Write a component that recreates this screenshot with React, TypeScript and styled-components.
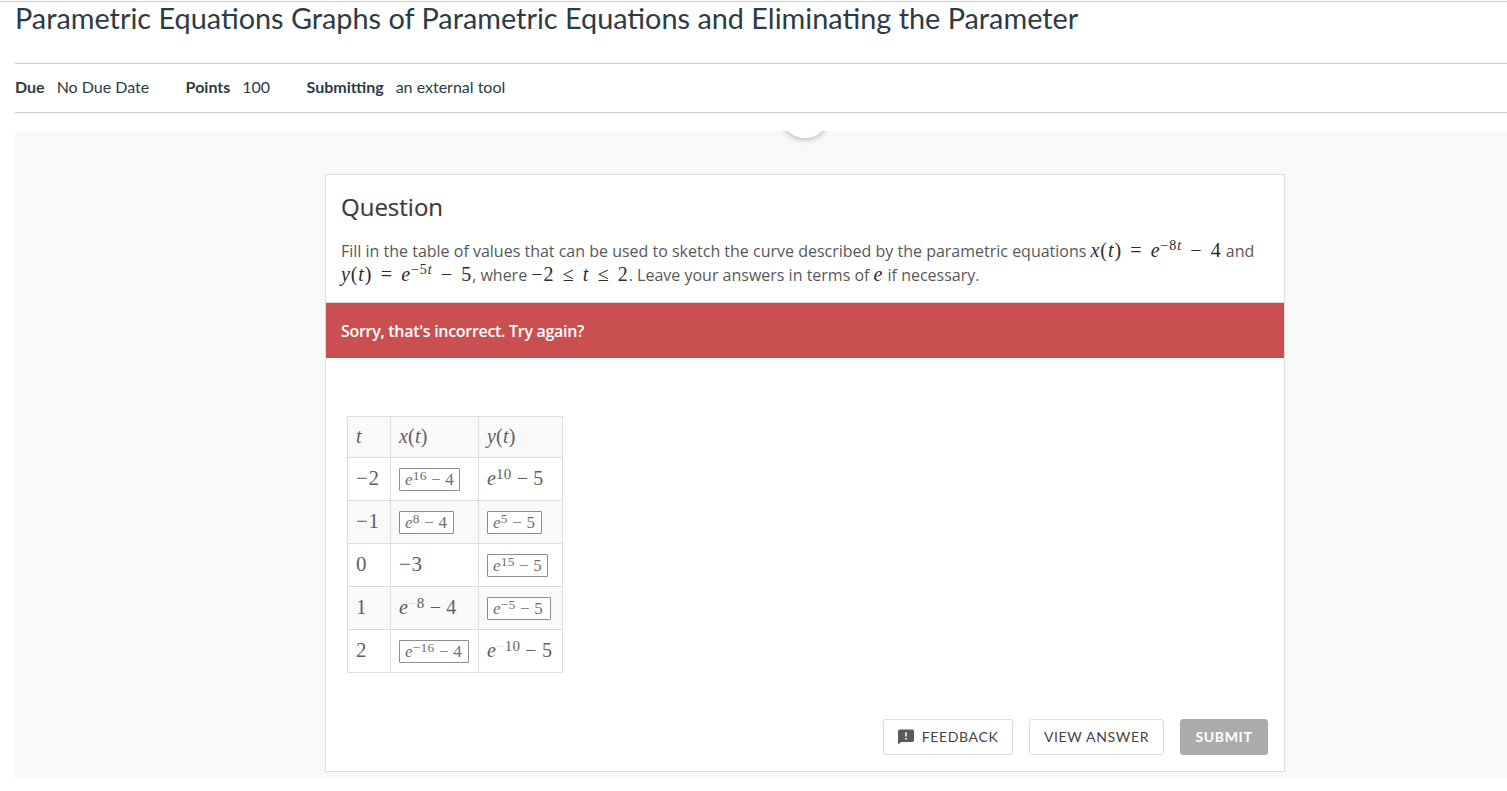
import React from "react";
import styled, { createGlobalStyle } from "styled-components";

const Global = createGlobalStyle`
  html, body { margin: 0; padding: 0; background: #fff; }
  body { font-family: "Lato", "Liberation Sans", sans-serif; overflow: hidden; }
  #root { width: 1507px; height: 791px; }
`;

const Page = styled.div`
  width: 1507px;
  height: 791px;
  border-top: 1px solid #c7cdd1;
  margin-top: 1px;
  box-sizing: border-box;
  padding-left: 15px;
`;
const Title = styled.h1`
  margin: 0;
  height: 61px;
  font: 400 28.83px/32px "Lato", sans-serif;
  color: #2d3b45;
  white-space: nowrap;
`;
const Details = styled.div`
  display: flex;
  align-items: center;
  height: 46px;
  padding-bottom: 2px;
  border-top: 1px solid #c7cdd1;
  border-bottom: 1px solid #c7cdd1;
  font: 400 16px/20px "Lato", sans-serif;
  color: #2d3b45;
`;
const Detail = styled.div`
  display: flex;
  gap: 12px;
  margin-right: 36.4px;
`;
const Label = styled.b`
  font-weight: 700;
`;
const Panel = styled.div`
  position: relative;
  margin-top: 18px;
  height: 647px;
  background: #f8f8f8;
  overflow: hidden;
  padding: 43px 0 0 310px;
  box-sizing: border-box;
`;
const Knob = styled.div`
  position: absolute;
  left: 769px;
  top: -26px;
  width: 42px;
  height: 33px;
  border-radius: 50%;
  background: #fff;
  box-shadow: 0 1px 6px rgba(0, 0, 0, 0.3);
`;
const Card = styled.div`
  width: 960px;
  height: 598px;
  box-sizing: border-box;
  background: #fff;
  border: 1px solid #dcdcdc;
  display: flex;
  flex-direction: column;
  font-family: "Open Sans", sans-serif;
`;
const Intro = styled.div`
  height: 127px;
  padding: 15px 15px 0;
  box-sizing: border-box;
`;
const Heading = styled.h2`
  margin: 0 0 16px;
  font: 400 24px/33px "Open Sans", sans-serif;
  color: #3c3c3c;
  -webkit-text-stroke: 0.2px #3c3c3c;
`;
const Prompt = styled.p`
  margin: 0;
  font: 400 16px/24px "Open Sans", sans-serif;
  color: #585858;
  white-space: nowrap;
`;
const M = styled.span`
  font-family: "Liberation Serif", serif;
  font-size: 20px;
  line-height: 0;
  color: #2c2c2c;
  letter-spacing: 0.9px;
  word-spacing: 2.4px;
`;
const I = styled.i`
  font-style: italic;
`;
const Sup = styled.sup`
  font-size: 14px;
  line-height: 0;
  vertical-align: 7px;
`;
const Banner = styled.div`
  height: 56px;
  display: flex;
  align-items: center;
  padding-left: 15px;
  background: #c94f50;
  border-top: 1px solid #d9d9d9;
  box-sizing: border-box;
  color: #fff;
  font: 600 16px/22px "Open Sans", sans-serif;
  letter-spacing: -0.3px;
`;
const Table = styled.table`
  margin: 58px 0 0 21px;
  border-collapse: collapse;
  table-layout: fixed;
  width: 215px;
  font-family: "Liberation Serif", serif;
  font-size: 20px;
  color: #5f5f5f;
`;
const Row = styled.tr<{ $h: number; $shade?: boolean }>`
  height: ${(p) => p.$h}px;
  background: ${(p) => (p.$shade ? "#f9f9f9" : "#fff")};
`;
const Cell = styled.td<{ $w?: number }>`
  ${(p) => (p.$w ? `width: ${p.$w}px;` : "")}
  border: 1px solid #dddddd;
  padding: 0 0 2px 8px;
  box-sizing: border-box;
  white-space: nowrap;
  vertical-align: middle;
  letter-spacing: 0.2px;
`;
const Answer = styled.span<{ $w: number }>`
  display: inline-block;
  width: ${(p) => p.$w}px;
  height: 23px;
  box-sizing: border-box;
  border: 1px solid #8e8e8e;
  border-radius: 1px;
  margin-top: 3px;
  padding-left: 5px;
  font-size: 17px;
  line-height: 22px;
  color: #707070;
  background: #fff;
  vertical-align: middle;
`;
const CellSup = styled.sup`
  font-size: 15px;
  line-height: 0;
  vertical-align: 6px;
`;
const AnswerSup = styled.sup`
  font-size: 13.5px;
  line-height: 0;
  vertical-align: 5px;
`;
const Faint = styled.span`
  color: #d4d4d4;
`;
const Plain = styled.span`
  font-size: 21px;
  letter-spacing: 0.6px;
`;
const Actions = styled.div`
  margin-top: auto;
  height: 52px;
  display: flex;
  justify-content: flex-end;
  gap: 16px;
  padding-right: 16px;
`;
const Button = styled.button<{ $w: number; $solid?: boolean }>`
  width: ${(p) => p.$w}px;
  height: 36px;
  padding: 0;
  display: flex;
  align-items: center;
  justify-content: center;
  gap: 8px;
  border-radius: 3px;
  border: 1px solid ${(p) => (p.$solid ? "#ababab" : "#dcdcdc")};
  background: ${(p) => (p.$solid ? "#ababab" : "#fff")};
  color: ${(p) => (p.$solid ? "#fff" : "#444")};
  font: ${(p) => (p.$solid ? 700 : 400)} 14px/20px "Lato", sans-serif;
  letter-spacing: 0.65px;
`;

const Ans = ({ w, base, sup, rest }: { w: number; base: string; sup: string; rest: string }) => (
  <Answer $w={w}>
    <I>{base}</I>
    <AnswerSup>{sup}</AnswerSup> − {rest}
  </Answer>
);

export default function App() {
  return (
    <Page>
      <Global />
      <Title>Parametric Equations Graphs of Parametric Equations and Eliminating the Parameter</Title>
      <Details>
        <Detail><Label>Due</Label><span>No Due Date</span></Detail>
        <Detail><Label>Points</Label><span>100</span></Detail>
        <Detail><Label>Submitting</Label><span>an external tool</span></Detail>
      </Details>
      <Panel>
        <Knob />
        <Card>
          <Intro>
            <Heading>Question</Heading>
            <Prompt>
              Fill in the table of values that can be used to sketch the curve described by the parametric equations{" "}
              <M><I>x</I>(<I>t</I>) = <I>e</I><Sup>−8<I>t</I></Sup> − 4</M> and
              <br />
              <M><I>y</I>(<I>t</I>) = <I>e</I><Sup>−5<I>t</I></Sup> − 5</M>, where{" "}
              <M>−2 ≤ <I>t</I> ≤ 2</M>. Leave your answers in terms of <M><I>e</I></M> if necessary.
            </Prompt>
          </Intro>
          <Banner>Sorry, that's incorrect. Try again?</Banner>
          <Table>
            <tbody>
              <Row $h={41} $shade>
                <Cell $w={43}><I>t</I></Cell>
                <Cell $w={88}><I>x</I>(<I>t</I>)</Cell>
                <Cell $w={84}><I>y</I>(<I>t</I>)</Cell>
              </Row>
              <Row $h={43}>
                <Cell><Plain>−2</Plain></Cell>
                <Cell><Ans w={61} base="e" sup="16" rest="4" /></Cell>
                <Cell><I>e</I><CellSup>10</CellSup> − 5</Cell>
              </Row>
              <Row $h={43} $shade>
                <Cell><Plain>−1</Plain></Cell>
                <Cell><Ans w={55} base="e" sup="8" rest="4" /></Cell>
                <Cell><Ans w={55} base="e" sup="5" rest="5" /></Cell>
              </Row>
              <Row $h={43}>
                <Cell><Plain>0</Plain></Cell>
                <Cell><Plain>−3</Plain></Cell>
                <Cell><Ans w={61} base="e" sup="15" rest="5" /></Cell>
              </Row>
              <Row $h={43} $shade>
                <Cell><Plain>1</Plain></Cell>
                <Cell><I>e</I><CellSup><Faint>−</Faint>8</CellSup> − 4</Cell>
                <Cell><Ans w={64} base="e" sup="−5" rest="5" /></Cell>
              </Row>
              <Row $h={43}>
                <Cell><Plain>2</Plain></Cell>
                <Cell><Ans w={70} base="e" sup="−16" rest="4" /></Cell>
                <Cell><I>e</I><CellSup><Faint>−</Faint>10</CellSup> − 5</Cell>
              </Row>
            </tbody>
          </Table>
          <Actions>
            <Button $w={130}>
              <svg width="16" height="16" viewBox="0 0 16 16" aria-hidden="true">
                <path fill="#5a5a5a" fillRule="evenodd" d="M1.6 0.5h12.8A1.6 1.6 0 0 1 16 2.1v9.2a1.6 1.6 0 0 1-1.6 1.6H3.2L0 15.5V2.1A1.6 1.6 0 0 1 1.6 0.5zM7.2 3.2v4.4h1.6V3.2zm0 5.8v1.6h1.6V9z" />
              </svg>
              FEEDBACK
            </Button>
            <Button $w={135}>VIEW ANSWER</Button>
            <Button $w={88} $solid>SUBMIT</Button>
          </Actions>
        </Card>
      </Panel>
    </Page>
  );
}
